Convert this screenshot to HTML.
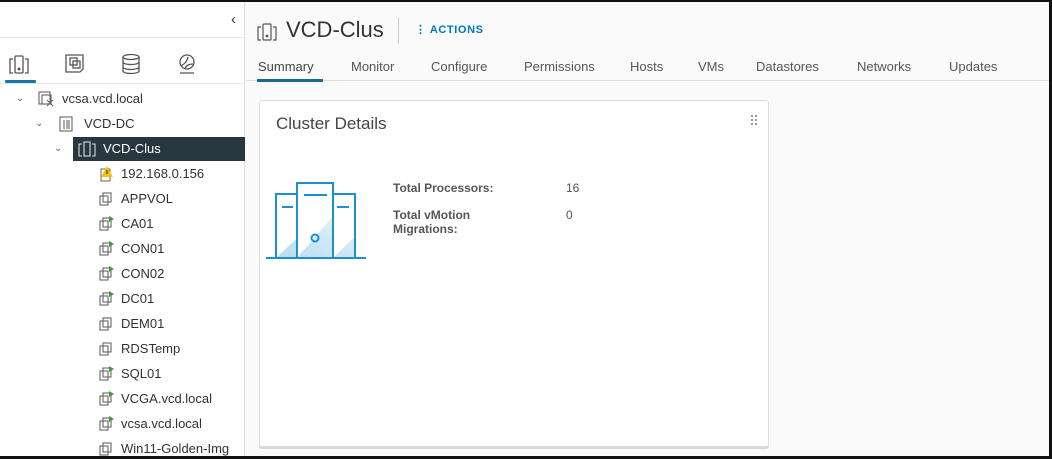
<!DOCTYPE html>
<html><head><style>
*{margin:0;padding:0;box-sizing:border-box}
body{width:1052px;height:459px;overflow:hidden;background:#111;font-family:"Liberation Sans",sans-serif;position:relative}
#app{position:absolute;left:0;top:2px;width:1049px;height:454px;background:#fafafa;overflow:hidden}
#side{position:absolute;left:0;top:0;width:245px;height:454px;background:#fff;border-right:1px solid #ddd}
.abs{position:absolute}
.row{position:absolute;height:25px;line-height:25px;font-size:13px;color:#313131;white-space:nowrap}
.row svg{position:absolute;top:5px}
.chev{position:absolute;font-size:10px;color:#666}
.tab{position:absolute;top:57px;font-size:13px;color:#565656}
</style></head><body>
<div id="app">
<div id="side">
  <div class="abs" style="left:231px;top:9px;font-size:15px;color:#333;">&#8249;</div>
  <div class="abs" style="left:0;top:35px;width:245px;height:1px;background:#e8e8e8"></div>
  <svg class="abs" style="left:8px;top:52px" width="22" height="22" viewBox="0 0 22 22" fill="none" stroke="#555" stroke-width="1.3"><rect x="7" y="2" width="8" height="17" rx="1"/><path d="M5 5H2v14h3M17 5h3v14h-3"/><circle cx="11" cy="15" r="0.8" fill="#555"/></svg>
  <div class="abs" style="left:5px;top:78px;width:31px;height:3px;background:#1a73a8;border-radius:1px"></div>
  <svg class="abs" style="left:64px;top:51px" width="22" height="22" viewBox="0 0 22 22" fill="none" stroke="#555" stroke-width="1.3"><path d="M2 2h17v14l-3 3H2z"/><rect x="6" y="5" width="7" height="7"/><rect x="9" y="8" width="7" height="7"/></svg>
  <svg class="abs" style="left:120px;top:51px" width="22" height="22" viewBox="0 0 22 22" fill="none" stroke="#555" stroke-width="1.3"><ellipse cx="11" cy="4" rx="8" ry="2.5"/><path d="M3 4v14c0 1.5 3.5 2.5 8 2.5s8-1 8-2.5V4M3 9c0 1.5 3.5 2.5 8 2.5s8-1 8-2.5M3 14c0 1.5 3.5 2.5 8 2.5s8-1 8-2.5"/></svg>
  <svg class="abs" style="left:176px;top:51px" width="22" height="22" viewBox="0 0 22 22" fill="none" stroke="#555" stroke-width="1.3"><circle cx="11" cy="9" r="7"/><path d="M5 13c3-2 6-4 7-9M9 16c1-4 4-5 8-5M4 20h14"/></svg>
  <div class="abs" style="left:0;top:81px;width:245px;height:1px;background:#e8e8e8"></div>

  <div class="chev" style="left:16px;top:91px">&#8964;</div>
  <div class="row" style="left:38px;top:84px"><svg width="16" height="16" viewBox="0 0 16 16" fill="none" stroke="#666" stroke-width="1.1"><rect x="1" y="1" width="11" height="12"/><rect x="4" y="4" width="9" height="9"/><path d="M9 9l6 6M15 9l-6 6"/></svg><span style="margin-left:24px">vcsa.vcd.local</span></div>
  <div class="chev" style="left:35px;top:116px">&#8964;</div>
  <div class="row" style="left:58px;top:109px"><svg width="16" height="16" viewBox="0 0 16 16" fill="none" stroke="#666" stroke-width="1.1"><rect x="2" y="1" width="12" height="14"/><path d="M6 4v9M9 4v9M11 4v9"/></svg><span style="margin-left:26px">VCD-DC</span></div>
  <div class="chev" style="left:54px;top:141px">&#8964;</div>
  <div class="abs" style="left:73px;top:135px;width:172px;height:24px;background:#27363f"></div>
  <div class="row" style="left:78px;top:134px;color:#fff"><svg width="18" height="16" viewBox="0 0 18 16" fill="none" stroke="#ddd" stroke-width="1.1"><rect x="6" y="1" width="6" height="14"/><path d="M4 3H1v12h3M14 3h3v12h-3"/></svg><span style="margin-left:25px">VCD-Clus</span></div>

  <div class="row" style="left:99px;top:159px"><svg width="16" height="16" viewBox="0 0 16 16"><rect x="2" y="3" width="9" height="12" fill="none" stroke="#666"/><path d="M8 0l6 11H2z" fill="#f5c400"/><path d="M8 4v4" stroke="#333" stroke-width="1.2"/></svg><span style="margin-left:22px">192.168.0.156</span></div>
  <div id="vms"></div>
</div>

<svg class="abs" style="left:257px;top:20px" width="20" height="20" viewBox="0 0 20 20" fill="none" stroke="#555" stroke-width="1.2"><rect x="6" y="2" width="8" height="16" rx="1"/><path d="M4 5H1v13h3M16 5h3v13h-3"/><circle cx="10" cy="14" r="0.8" fill="#555"/></svg>
<div class="abs" style="left:286px;top:15px;font-size:22px;color:#333">VCD-Clus</div>
<div class="abs" style="left:398px;top:16px;width:1px;height:26px;background:#ccc"></div>
<div class="abs" style="left:415px;top:21px;font-size:11px;color:#0079b8;font-weight:bold;letter-spacing:0.6px">⋮ ACTIONS</div>

<div class="tab" style="left:258px;color:#444">Summary</div>
<div class="tab" style="left:351px">Monitor</div>
<div class="tab" style="left:431px">Configure</div>
<div class="tab" style="left:524px">Permissions</div>
<div class="tab" style="left:630px">Hosts</div>
<div class="tab" style="left:698px">VMs</div>
<div class="tab" style="left:756px">Datastores</div>
<div class="tab" style="left:857px">Networks</div>
<div class="tab" style="left:949px">Updates</div>
<div class="abs" style="left:246px;top:78px;width:803px;height:1px;background:#ddd"></div>
<div class="abs" style="left:257px;top:77px;width:66px;height:3px;background:#1a6a90"></div>

<div class="abs" style="left:259px;top:98px;width:510px;height:347px;background:#fff;border:1px solid #ddd;border-radius:3px;box-shadow:0 2px 0 #d4d8da"></div>
<div class="abs" style="left:276px;top:112px;font-size:17px;color:#444">Cluster Details</div>
<svg class="abs" style="left:750px;top:112px" width="8" height="12" viewBox="0 0 8 12" fill="#777"><circle cx="2" cy="2" r="1"/><circle cx="6" cy="2" r="1"/><circle cx="2" cy="6" r="1"/><circle cx="6" cy="6" r="1"/><circle cx="2" cy="10" r="1"/><circle cx="6" cy="10" r="1"/></svg>
<svg class="abs" style="left:264px;top:176px" width="104" height="84" viewBox="0 0 104 84">
<defs><linearGradient id="g" x1="0" y1="1" x2="1" y2="0"><stop offset="0" stop-color="#b7dcf1"/><stop offset="1" stop-color="#e6f3fb"/></linearGradient></defs>
<path d="M12 80L33 60V80zM33 80L69 38V80zM69 80L91 58V80z" fill="url(#g)"/>
<g fill="none" stroke="#1b8fd0" stroke-width="2">
<path d="M2 80h100"/>
<path d="M33 16H12v64M69 16h22v64"/>
<rect x="33" y="5" width="36" height="75"/>
<path d="M18 29h11M40 17h23M73 29h12"/>
<circle cx="51" cy="60" r="3.5"/>
</g>
</svg>
<div class="abs" style="left:393px;top:179px;font-size:12px;color:#565656;font-weight:bold;line-height:14px">Total Processors:</div>
<div class="abs" style="left:566px;top:179px;font-size:12px;color:#565656">16</div>
<div class="abs" style="left:393px;top:206px;font-size:12px;color:#565656;font-weight:bold;line-height:14px">Total vMotion<br>Migrations:</div>
<div class="abs" style="left:566px;top:206px;font-size:12px;color:#565656">0</div>
</div>
<script>
var vms=[["APPVOL",0],["CA01",1],["CON01",1],["CON02",1],["DC01",1],["DEM01",0],["RDSTemp",0],["SQL01",1],["VCGA.vcd.local",1],["vcsa.vcd.local",1],["Win11-Golden-Img",0]];
var h="";
vms.forEach(function(v,i){
 var t=184+i*25;
 h+='<div class="row" style="left:99px;top:'+t+'px"><svg width="16" height="16" viewBox="0 0 16 16" fill="none" stroke="#666" stroke-width="1.1"><rect x="1" y="5" width="8" height="9"/><rect x="4" y="2" width="8" height="9"/>'+(v[1]?'<path d="M10 0l5 3-5 3z" fill="#3c9b3c" stroke="none"/>':'')+'</svg><span style="margin-left:22px">'+v[0]+'</span></div>';
});
document.getElementById("vms").innerHTML=h;
</script>
</body></html>
